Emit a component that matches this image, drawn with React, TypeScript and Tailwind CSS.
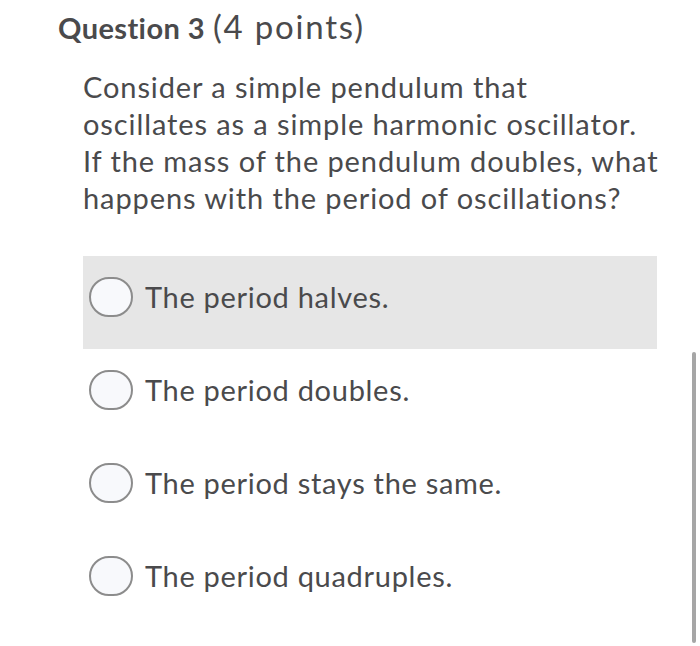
const options = [
  "The period halves.",
  "The period doubles.",
  "The period stays the same.",
  "The period quadruples.",
];

export default function App() {
  return (
    <div
      className="relative h-[646px] w-[700px] overflow-hidden bg-white text-[#4a4a4c]"
      style={{ fontFamily: "Lato, 'Open Sans', sans-serif" }}
    >
      {/* Header */}
      <div className="flex items-baseline pl-[58px] pt-[6px] leading-[40px]">
        <span className="text-[29px] font-bold tracking-[0.4px]">Question 3</span>
        <span className="ml-[8px] text-[33px] tracking-[1.8px]">(4 points)</span>
      </div>

      {/* Question */}
      <p className="mt-[20px] pl-[83px] pr-[30px] text-[29px] leading-[37px] tracking-[0.9px]">
        Consider a simple pendulum that
        <br />
        oscillates as a simple harmonic oscillator.
        <br />
        If the mass of the pendulum doubles, what
        <br />
        happens with the period of oscillations?
      </p>

      {/* Options */}
      <div className="mt-[40px] ml-[83px] w-[574px]">
        {options.map((opt, i) => (
          <div
            key={opt}
            className={`flex h-[93px] items-center gap-[12px] pb-[12px] pl-[6px] ${
              i === 0 ? "bg-[#e6e6e6]" : ""
            }`}
          >
            <span className="h-[40px] w-[44px] shrink-0 rounded-full border-2 border-[#8c8c8c] bg-[#f8f9fc]" />
            <span className="text-[29px] leading-[36px] tracking-[0.7px]">{opt}</span>
          </div>
        ))}
      </div>

      {/* Scrollbar */}
      <div className="absolute right-[4px] top-[352px] h-[291px] w-[4px] rounded-full bg-[#a6a6a6]" />
    </div>
  );
}
